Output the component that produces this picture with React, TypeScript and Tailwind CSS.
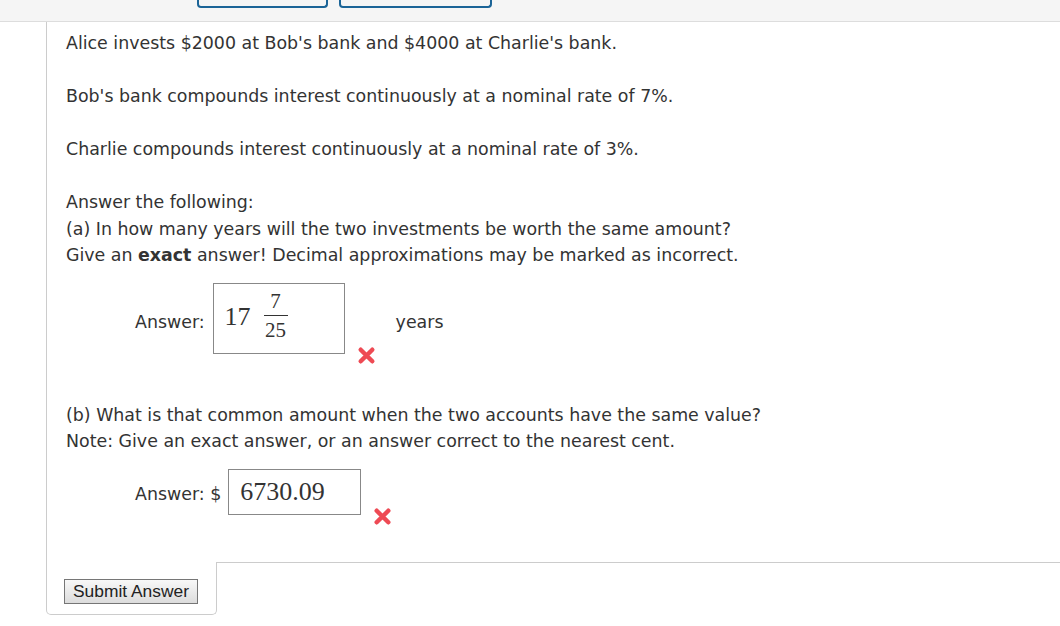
const WrongMark = ({ className = "" }: { className?: string }) => (
  <svg viewBox="0 0 18 18" className={`w-[19px] h-[19px] shrink-0 ${className}`}>
    <path
      d="M3.5 3.5 L14.5 14.5 M14.5 3.5 L3.5 14.5"
      stroke="#ee4a54"
      strokeWidth="4.2"
      strokeLinecap="round"
      fill="none"
    />
  </svg>
);

const App = () => {
  return (
    <div className="w-[1060px] h-[626px] overflow-hidden bg-white font-['Verdana','DejaVu_Sans',sans-serif] text-[17.4px] text-[#333]">
      {/* top strip with the tab buttons peeking in */}
      <div className="h-[22px] bg-[#f5f5f5] border-b border-[#dddddd] flex">
        <div className="ml-[197px] w-[131px] h-[8px] border-x-2 border-b-2 border-[#1b6497] rounded-b-[4px]" />
        <div className="ml-[11px] w-[153px] h-[8px] border-x-2 border-b-2 border-[#1b6497] rounded-b-[4px]" />
      </div>

      <div className="ml-[46px]">
        <div className="border-l border-[#cccccc] pl-[19px] pt-[8px] h-[540px]">
          <div className="leading-[26.5px]">
            <p>Alice invests $2000 at Bob's bank and $4000 at Charlie's bank.</p>
            <br />
            <p>Bob's bank compounds interest continuously at a nominal rate of 7%.</p>
            <br />
            <p>Charlie compounds interest continuously at a nominal rate of 3%.</p>
            <br />
            <p>Answer the following:</p>
            <p>(a) In how many years will the two investments be worth the same amount?</p>
            <p>
              Give an <b>exact</b> answer! Decimal approximations may be marked as incorrect.
            </p>
          </div>

          <div className="flex items-start mt-[14px] ml-[69px]">
            <span className="mt-[26px] leading-[26px]">Answer:</span>
            <div className="ml-[8px] w-[132px] h-[71px] border border-[#888888] flex items-center pl-[11px] font-['Liberation_Serif','Times_New_Roman',serif] text-[#333]">
              <span className="text-[26px] leading-none -mt-[3px]">17</span>
              <span className="ml-[13px] -mt-[4px] flex flex-col items-center text-[21px] leading-none">
                <span className="pb-[3px]">7</span>
                <span className="w-[24px] border-t border-[#333]" />
                <span className="pt-[4px]">25</span>
              </span>
            </div>
            <WrongMark className="ml-[12px] mt-[63px]" />
            <span className="ml-[20px] mt-[26px] leading-[26px]">years</span>
          </div>

          <div className="leading-[26.5px] mt-[37px]">
            <p>(b) What is that common amount when the two accounts have the same value?</p>
            <p>Note: Give an exact answer, or an answer correct to the nearest cent.</p>
          </div>

          <div className="flex items-start mt-[14px] ml-[69px]">
            <span className="mt-[12px] leading-[26px]">Answer: $</span>
            <div className="ml-[7px] w-[133px] h-[46px] border border-[#888888] flex items-center pl-[11px] font-['Liberation_Serif','Times_New_Roman',serif] text-[26px] text-[#333]">
              6730.09
            </div>
            <WrongMark className="ml-[12px] mt-[38px]" />
          </div>
        </div>

        <div className="flex">
          <div className="w-[171px] h-[53px] border-l border-r border-b border-[#cccccc] rounded-b-[5px] pl-[17px] pt-[16px]">
            <button className="h-[25px] w-[134px] border border-[#767676] bg-gradient-to-b from-[#f8f8f8] to-[#dcdcdc] font-['Liberation_Sans','Arial',sans-serif] text-[17.4px] text-[#222] leading-none">
              Submit Answer
            </button>
          </div>
          <div className="flex-1 border-t border-[#cccccc]" />
        </div>
      </div>
    </div>
  );
};

export default App;
